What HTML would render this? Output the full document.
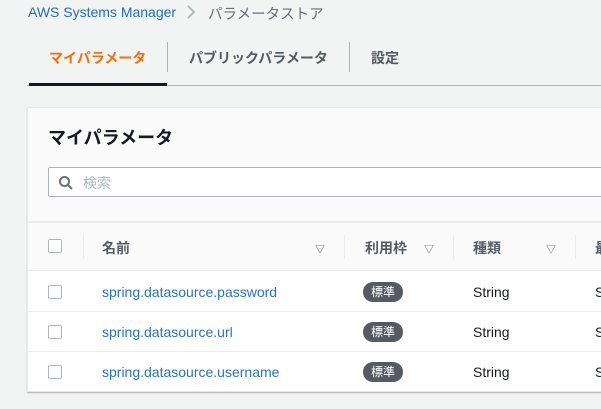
<!DOCTYPE html>
<html><head><meta charset="utf-8"><style>
*{margin:0;padding:0;box-sizing:border-box}
body{width:601px;height:409px;overflow:hidden;background:#f2f3f3;font-family:"Liberation Sans","Noto Sans CJK JP",sans-serif;position:relative;color:#16191f}
.a{position:absolute;white-space:nowrap}
.bc{top:4px;left:28px;font-size:14px;color:#1f6fb8}
.bc2{top:3px;left:208px;font-size:14.5px;color:#687078}
.tab{top:48px;font-size:14px;font-weight:bold;color:#545b64}
.sep{width:1px;background:#aab7b8;top:42px;height:30px}
.card{left:27px;top:107px;width:580px;height:285px;background:#fff;border:1px solid #e6e9e9;box-shadow:0 1px 1px rgba(0,28,36,.3)}
.hdr{left:0;top:0;width:100%;height:114px;background:#fafafa;border-bottom:1px solid #eaeded}
.cb{width:14px;height:14px;border:1px solid #aab7b8;border-radius:2px;background:#fff}
.th{font-size:14px;font-weight:bold;color:#545b64}
.tri{font-size:10px;color:#687078;font-weight:bold}
.vd{width:1px;height:24px;background:#eaeded;top:235px}
.row{left:28px;width:580px;height:1px;background:#eaeded}
.lnk{font-size:14px;color:#2a74bd;left:102px}
.bd{left:363px;width:40px;height:20px;border-radius:10px;background:#545b64;color:#fff;font-size:12px;text-align:center;line-height:20px}
.str{left:473px;font-size:14px}
</style></head><body>
<div class="a bc">AWS Systems Manager</div>
<svg class="a" style="left:185px;top:4px" width="12" height="16"><path d="M3 2l6 6-6 6" stroke="#aab7b8" stroke-width="1.8" fill="none"/></svg>
<div class="a bc2">パラメータストア</div>
<div class="a tab" style="left:49px;color:#ec7211">マイパラメータ</div>
<div class="a sep" style="left:167px"></div>
<div class="a tab" style="left:189px">パブリックパラメータ</div>
<div class="a sep" style="left:349px"></div>
<div class="a tab" style="left:371px">設定</div>
<div class="a" style="left:27px;top:85px;width:574px;height:1px;background:#aab7b8"></div>
<div class="a" style="left:29px;top:83px;width:138px;height:3px;background:#16191f"></div>
<div class="a card"><div class="a hdr"></div></div>
<div class="a" style="left:48px;top:124px;font-size:18px;font-weight:bold">マイパラメータ</div>
<div class="a" style="left:48px;top:167px;width:560px;height:30px;background:#fff;border:1px solid #aab7b8;border-radius:2px"></div>
<svg class="a" style="left:58px;top:175px" width="16" height="16"><circle cx="6.5" cy="6.5" r="4.5" stroke="#687078" stroke-width="2" fill="none"/><path d="M10 10l4 4" stroke="#687078" stroke-width="2"/></svg>
<div class="a" style="left:83px;top:173px;font-size:14px;color:#aab7b8">検索</div>
<div class="a" style="left:28px;top:222px;width:580px;height:49px;background:#fafafa;border-top:1px solid #eaeded;border-bottom:1px solid #eaeded"></div>
<div class="a cb" style="left:48px;top:239px"></div>
<div class="a vd" style="left:83px"></div>
<div class="a th" style="left:102px;top:238px">名前</div>
<div class="a tri" style="left:315px;top:241px">▽</div>
<div class="a vd" style="left:344px"></div>
<div class="a th" style="left:365px;top:238px">利用枠</div>
<div class="a tri" style="left:424px;top:241px">▽</div>
<div class="a vd" style="left:453px"></div>
<div class="a th" style="left:473px;top:238px">種類</div>
<div class="a tri" style="left:546px;top:241px">▽</div>
<div class="a vd" style="left:575px"></div>
<div class="a th" style="left:595px;top:238px">最</div>
<div class="a cb" style="left:48px;top:285px"></div>
<div class="a lnk" style="top:284px">spring.datasource.password</div>
<div class="a bd" style="top:282px">標準</div>
<div class="a str" style="top:284px">String</div>
<div class="a str" style="left:595px;top:284px">S</div>
<div class="a row" style="top:311px"></div>
<div class="a cb" style="left:48px;top:325px"></div>
<div class="a lnk" style="top:324px">spring.datasource.url</div>
<div class="a bd" style="top:322px">標準</div>
<div class="a str" style="top:324px">String</div>
<div class="a str" style="left:595px;top:324px">S</div>
<div class="a row" style="top:351px"></div>
<div class="a cb" style="left:48px;top:365px"></div>
<div class="a lnk" style="top:364px">spring.datasource.username</div>
<div class="a bd" style="top:362px">標準</div>
<div class="a str" style="top:364px">String</div>
<div class="a str" style="left:595px;top:364px">S</div>
</body></html>
